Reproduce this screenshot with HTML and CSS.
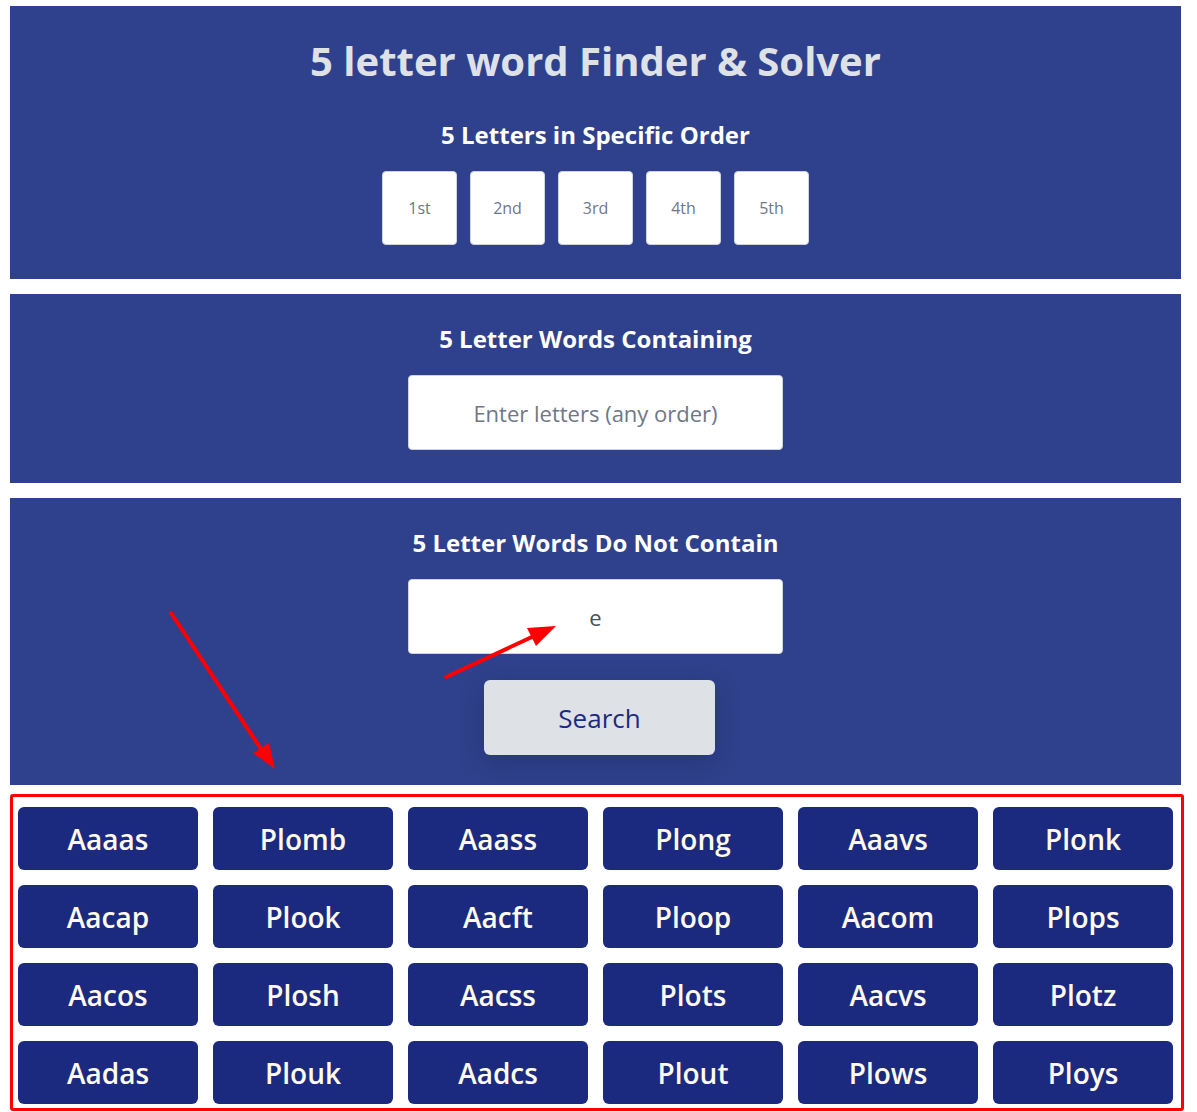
FILE: index.html
```html
<!DOCTYPE html>
<html lang="en">
<head>
<meta charset="utf-8">
<title>5 letter word Finder &amp; Solver</title>
<link rel="stylesheet" href="styles.css">
</head>
<body>
<div class="page">
  <section class="panel panel-top">
    <h1 class="title">5 letter word Finder &amp; Solver</h1>
    <h2 class="heading">5 Letters in Specific Order</h2>
    <div class="slots">
      <input class="slot" type="text" placeholder="1st">
      <input class="slot" type="text" placeholder="2nd">
      <input class="slot" type="text" placeholder="3rd">
      <input class="slot" type="text" placeholder="4th">
      <input class="slot" type="text" placeholder="5th">
    </div>
  </section>

  <section class="panel">
    <h2 class="heading">5 Letter Words Containing</h2>
    <input class="field" type="text" placeholder="Enter letters (any order)">
  </section>

  <section class="panel">
    <h2 class="heading">5 Letter Words Do Not Contain</h2>
    <input class="field" type="text" value="e">
    <button class="search" type="button">Search</button>
  </section>

  <div class="results">
    <a class="word">Aaaas</a><a class="word">Plomb</a><a class="word">Aaass</a><a class="word">Plong</a><a class="word">Aaavs</a><a class="word">Plonk</a>
    <a class="word">Aacap</a><a class="word">Plook</a><a class="word">Aacft</a><a class="word">Ploop</a><a class="word">Aacom</a><a class="word">Plops</a>
    <a class="word">Aacos</a><a class="word">Plosh</a><a class="word">Aacss</a><a class="word">Plots</a><a class="word">Aacvs</a><a class="word">Plotz</a>
    <a class="word">Aadas</a><a class="word">Plouk</a><a class="word">Aadcs</a><a class="word">Plout</a><a class="word">Plows</a><a class="word">Ploys</a>
  </div>

  <svg class="annotations" width="1197" height="1112" viewBox="0 0 1197 1112" aria-hidden="true">
    <line x1="171" y1="613" x2="263" y2="752" stroke="#ff0000" stroke-width="4" stroke-linecap="round"/>
    <polygon points="275,769 253,753 269,743" fill="#ff0000"/>
    <line x1="446" y1="677" x2="534" y2="636" stroke="#ff0000" stroke-width="4" stroke-linecap="round"/>
    <polygon points="556,626 527,628 536,646" fill="#ff0000"/>
  </svg>
</div>
</body>
</html>
```

FILE: styles.css
```css
* { box-sizing: border-box; }

html, body {
  margin: 0;
  padding: 0;
  background: #ffffff;
}

body {
  font-family: "Open Sans", "Noto Sans", "Liberation Sans", sans-serif;
}

.page {
  position: relative;
  width: 1197px;
  padding: 6px 0 0 10px;
  display: flex;
  flex-direction: column;
}

.panel {
  width: 1171px;
  background: #2f418c;
  display: flex;
  flex-direction: column;
  align-items: center;
  padding: 30px 0 33px;
  margin-bottom: 15px;
}

.panel-top {
  padding-top: 30px;
  padding-bottom: 34px;
}

.panel:nth-of-type(3) {
  padding-bottom: 30px;
  margin-bottom: 9px;
}

.title {
  margin: 0;
  font-size: 40px;
  line-height: 50px;
  font-weight: 700;
  color: #dee2e6;
}

.heading {
  margin: 0;
  font-size: 24px;
  line-height: 29px;
  font-weight: 700;
  color: #ffffff;
}

.title + .heading {
  margin-top: 34px;
}

.slots {
  display: flex;
  gap: 13px;
  margin-top: 22px;
}

.slot {
  width: 75px;
  height: 74px;
  border: 1px solid #ced4da;
  border-radius: 4px;
  background: #ffffff;
  text-align: center;
  font-family: inherit;
  font-size: 16px;
  color: #495057;
  padding: 0;
}

.slot::placeholder,
.field::placeholder {
  color: #6f7787;
  opacity: 1;
}

.field {
  margin-top: 22px;
  width: 375px;
  height: 75px;
  border: 1px solid #ced4da;
  border-radius: 4px;
  background: #ffffff;
  text-align: center;
  font-family: inherit;
  font-size: 22px;
  color: #495057;
  padding: 0;
}

.search {
  margin-top: 26px;
  margin-left: 8px;
  width: 231px;
  height: 75px;
  border: 0;
  border-radius: 6px;
  background: #dee2e6;
  color: #1c2b7f;
  font-family: inherit;
  font-size: 26px;
  font-weight: 500;
  box-shadow: 0 8px 24px rgba(20, 30, 80, 0.3);
}

.results {
  width: 1174px;
  border: 3px solid #ff0000;
  border-radius: 3px;
  padding: 10px 8px 4px 5px;
  display: grid;
  grid-template-columns: repeat(6, 180px);
  grid-auto-rows: 63px;
  column-gap: 15px;
  row-gap: 15px;
}

.word {
  display: flex;
  align-items: center;
  justify-content: center;
  background: #1b2a7f;
  border-radius: 6px;
  color: #fffaeb;
  font-size: 28px;
  font-weight: 600;
  text-decoration: none;
}

.annotations {
  position: absolute;
  left: 0;
  top: 0;
  pointer-events: none;
}
```
